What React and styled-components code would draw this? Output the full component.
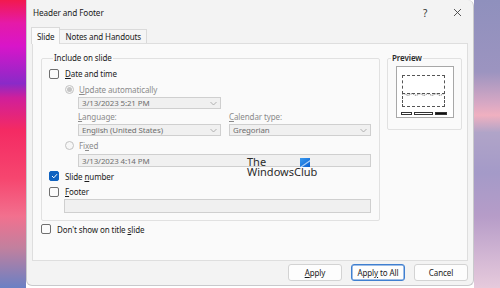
import React from "react";
import styled, { createGlobalStyle, css } from "styled-components";

const Global = createGlobalStyle`
  html, body { margin: 0; padding: 0; }
  body { width: 500px; height: 288px; overflow: hidden; font-family: "Noto Sans", "Open Sans", sans-serif; letter-spacing: -0.1px; }
`;

const Page = styled.div`
  display: grid;
  grid-template-columns: 26px 1fr 26px;
  width: 500px;
  height: 288px;
`;

const Wallpaper = styled.div`
  ${(p) =>
    p.$side === "left"
      ? css`
          background: linear-gradient(180deg, #f2194e 0%, #e51aa8 8%, #d815c9 16%, #8a2ac8 29%, #d01f9a 34%, #f42a63 45%, #f6466f 62%, #f2708e 75%, #c2809e 86%, #6a80c4 100%);
        `
      : css`
          background: linear-gradient(180deg, #8f90bd 0%, #9c94c0 25%, #d8a8c4 36%, #f0b0c0 40%, #b0a4c8 46%, #a49ac8 60%, #b69cc8 75%, #d8bcd6 92%, #e6cadc 100%);
        `}
`;

const Dialog = styled.div`
  display: flex;
  flex-direction: column;
  background: #f3f3f3;
  border: 1px solid #c9c9cc;
  border-top: none;
  border-radius: 0 6px 6px 6px;
  height: 286px;
  box-sizing: border-box;
`;

const TitleBar = styled.div`
  display: flex;
  align-items: center;
  height: 25px;
  padding: 0 0 0 6px;
  font-size: 8.2px;
  color: #1b1b1b;
`;

const Title = styled.div`
  flex: 1;
`;

const TitleButton = styled.div`
  width: 32px;
  display: flex;
  justify-content: center;
  align-items: center;
  font-size: 10px;
  color: #333;
`;

const Tabs = styled.div`
  display: flex;
  align-items: flex-end;
  height: 18px;
  padding-left: 4px;
`;

const Tab = styled.div`
  box-sizing: border-box;
  font-size: 8px;
  color: #1b1b1b;
  padding: 0 5px;
  display: flex;
  align-items: center;
  border: 1px solid #dadada;
  border-bottom: none;
  ${(p) =>
    p.$active
      ? css`
          height: 17px;
          background: #fafafa;
          margin-bottom: -1px;
          position: relative;
          z-index: 1;
        `
      : css`
          height: 14px;
          background: #f5f5f5;
          border-left: none;
        `}
`;

const Panel = styled.div`
  position: relative;
  margin: 0 5px;
  height: 218px;
  box-sizing: border-box;
  background: #fafafa;
  border: 1px solid #dedede;
  display: flex;
  flex-direction: column;
  padding: 8px 0 0 8px;
`;

const PanelTop = styled.div`
  display: flex;
  gap: 7px;
  align-items: flex-start;
`;

const Group = styled.fieldset`
  margin: 0;
  box-sizing: border-box;
  border: 1px solid #e1e1e1;
  border-radius: 2px;
  width: ${(p) => p.$w}px;
  height: ${(p) => p.$h}px;
  padding: ${(p) => p.$pad || "0"};
  display: flex;
  flex-direction: column;
  min-width: 0;
`;

const Legend = styled.legend`
  font-size: 8px;
  color: ${(p) => (p.$strong ? "#2a2a2a" : "#1b1b1b")};
  font-weight: ${(p) => (p.$strong ? 600 : 400)};
  padding: 0 1px;
  margin-left: ${(p) => p.$ml || 4}px;
  line-height: 12px;
`;

const Row = styled.div`
  display: flex;
  align-items: center;
  height: ${(p) => p.$h}px;
  padding-left: ${(p) => p.$indent || 0}px;
  margin-top: ${(p) => p.$mt || 0}px;
  gap: ${(p) => p.$gap || 6}px;
  flex-shrink: 0;
`;

const Label = styled.span`
  font-size: 8px;
  color: ${(p) => (p.$disabled ? "#8b8b8b" : "#1b1b1b")};
  white-space: nowrap;
`;

const Key = styled.span`
  text-decoration: underline;
  text-underline-offset: 1px;
`;

const Box = styled.span`
  box-sizing: border-box;
  width: 10px;
  height: 10px;
  border-radius: 2px;
  flex-shrink: 0;
  display: flex;
  align-items: center;
  justify-content: center;
  ${(p) =>
    p.$checked
      ? css`
          background: #0f62c0;
          border: 1px solid #0f62c0;
        `
      : css`
          background: #fbfbfb;
          border: 1px solid #6f6f6f;
        `}
`;

const Radio = styled.span`
  box-sizing: border-box;
  width: 9px;
  height: 9px;
  border-radius: 50%;
  border: 1px solid #c2c2c2;
  background: #f7f7f7;
  flex-shrink: 0;
  display: flex;
  align-items: center;
  justify-content: center;
  &::after {
    content: "";
    display: ${(p) => (p.$on ? "block" : "none")};
    width: 5px;
    height: 5px;
    border-radius: 50%;
    background: #c4c4c4;
  }
`;

const Field = styled.div`
  box-sizing: border-box;
  width: ${(p) => p.$w}px;
  height: ${(p) => p.$h || 12}px;
  border: 1px solid #cfcfcf;
  background: #f0f0f0;
  display: flex;
  align-items: center;
  padding-left: 3px;
  font-size: 7.9px;
  color: #6e6e6e;
  flex-shrink: 0;
`;

const FieldText = styled.span`
  flex: 1;
  white-space: nowrap;
`;

const Chevron = styled.span`
  width: 14px;
  display: flex;
  justify-content: center;
  align-items: center;
`;

const DualRow = styled.div`
  display: flex;
  gap: 8px;
  padding-left: ${(p) => p.$indent}px;
  height: ${(p) => p.$h}px;
  align-items: center;
  flex-shrink: 0;
`;

const Half = styled.div`
  width: ${(p) => p.$w}px;
  display: flex;
  align-items: center;
`;

const Outside = styled.div`
  margin-top: 3px;
`;

const Thumb = styled.div`
  box-sizing: border-box;
  margin: 2px auto 0;
  width: 58px;
  height: 52px;
  background: #fff;
  border: 1px solid #a8a8a8;
  display: flex;
  flex-direction: column;
  padding: 8px 6px 2px 5px;
`;

const Dash = styled.div`
  box-sizing: border-box;
  width: 43px;
  height: ${(p) => p.$h}px;
  border: 1px dashed #555;
  ${(p) => p.$top === false && css`border-top: none;`}
`;

const Wave = styled.svg`
  display: block;
  margin-top: -1px;
`;

const BarRow = styled.div`
  display: flex;
  gap: 2px;
  margin-top: auto;
  margin-left: -1px;
`;

const Bar = styled.div`
  height: 3px;
  width: ${(p) => p.$w}px;
  box-sizing: border-box;
  border: 1px solid #333;
  background: ${(p) => (p.$fill ? "#111" : "#fff")};
`;

const ButtonBar = styled.div`
  flex: 1;
  display: flex;
  justify-content: flex-end;
  align-items: center;
  gap: 9px;
  padding-right: 5px;
  padding-bottom: 1px;
`;

const Button = styled.div`
  box-sizing: border-box;
  width: 54px;
  height: 17px;
  background: #fdfdfd;
  border: 1px solid ${(p) => (p.$focus ? "#3f7fd0" : "#d3d3d3")};
  border-radius: 3px;
  display: flex;
  align-items: center;
  justify-content: center;
  font-size: 8px;
  color: #1b1b1b;
  ${(p) => p.$focus && css`box-shadow: inset 0 0 0 0.5px #3f7fd0;`}
`;

const ButtonText = styled.span`
  white-space: nowrap;
`;

const Watermark = styled.div`
  position: absolute;
  left: 214px;
  top: 113px;
  font-size: 11px;
  letter-spacing: 0;
  line-height: 10px;
  color: #2b2b2b;
  pointer-events: none;
`;

const Logo = styled.svg`
  position: absolute;
  left: 53px;
  top: 1px;
`;

function ChevronIcon() {
  return (
    <Chevron>
      <svg width="7" height="5" viewBox="0 0 7 5">
        <path d="M0.5 1 L3.5 4 L6.5 1" fill="none" stroke="#a8a8a8" strokeWidth="0.9" />
      </svg>
    </Chevron>
  );
}

function Check({ checked }) {
  return (
    <Box $checked={checked}>
      {checked && (
        <svg width="7" height="6" viewBox="0 0 7 6">
          <path d="M1 3 L2.8 4.8 L6 1.2" fill="none" stroke="#fff" strokeWidth="1" />
        </svg>
      )}
    </Box>
  );
}

export default function App() {
  return (
    <>
      <Global />
      <Page>
        <Wallpaper $side="left" />
        <Dialog>
          <TitleBar>
            <Title>Header and Footer</Title>
            <TitleButton>?</TitleButton>
            <TitleButton>
              <svg width="9" height="9" viewBox="0 0 9 9">
                <path d="M1 1 L8 8 M8 1 L1 8" stroke="#444" strokeWidth="0.9" />
              </svg>
            </TitleButton>
          </TitleBar>
          <Tabs>
            <Tab $active>Slide</Tab>
            <Tab>Notes and Handouts</Tab>
          </Tabs>
          <Panel>
            <PanelTop>
              <Group $w={339} $h={169} $pad="1px 0 0 7px">
                <Legend>Include on slide</Legend>
                <Row $h={17}>
                  <Check />
                  <Label><Key>D</Key>ate and time</Label>
                </Row>
                <Row $h={15} $indent={16} $gap={5}>
                  <Radio $on />
                  <Label $disabled><Key>U</Key>pdate automatically</Label>
                </Row>
                <Row $h={12} $indent={29}>
                  <Field $w={143}>
                    <FieldText>3/13/2023 5:21 PM</FieldText>
                    <ChevronIcon />
                  </Field>
                </Row>
                <DualRow $indent={29} $h={15}>
                  <Half $w={143}><Label $disabled><Key>L</Key>anguage:</Label></Half>
                  <Half $w={142}><Label $disabled><Key>C</Key>alendar type:</Label></Half>
                </DualRow>
                <DualRow $indent={29} $h={12}>
                  <Field $w={143}>
                    <FieldText>English (United States)</FieldText>
                    <ChevronIcon />
                  </Field>
                  <Field $w={142}>
                    <FieldText>Gregorian</FieldText>
                    <ChevronIcon />
                  </Field>
                </DualRow>
                <Row $h={18} $indent={16} $gap={5}>
                  <Radio />
                  <Label $disabled>Fi<Key>x</Key>ed</Label>
                </Row>
                <Row $h={13} $indent={29}>
                  <Field $w={293} $h={13}>
                    <FieldText>3/13/2023 4:14 PM</FieldText>
                  </Field>
                </Row>
                <Row $h={16} $mt={1}>
                  <Check checked />
                  <Label>Slide <Key>n</Key>umber</Label>
                </Row>
                <Row $h={15}>
                  <Check />
                  <Label><Key>F</Key>ooter</Label>
                </Row>
                <Row $h={14} $indent={15}>
                  <Field $w={307} $h={14} />
                </Row>
              </Group>
              <Group $w={75} $h={78} $pad="0">
                <Legend $strong $ml={3}>Preview</Legend>
                <Thumb>
                  <Dash $h={19} />
                  <Wave width="43" height="3" viewBox="0 0 43 3">
                    <path d="M0 1.5 Q2 0 4 1.5 T8 1.5 T12 1.5 T16 1.5 T20 1.5 T24 1.5 T28 1.5 T32 1.5 T36 1.5 T40 1.5 T44 1.5" fill="none" stroke="#555" strokeWidth="0.8" strokeDasharray="1.5 0.8" />
                  </Wave>
                  <Dash $h={11} $top={false} />
                  <BarRow>
                    <Bar $w={12} />
                    <Bar $w={21} />
                    <Bar $w={12} $fill />
                  </BarRow>
                </Thumb>
              </Group>
            </PanelTop>
            <Outside>
              <Row $h={10}>
                <Check />
                <Label>Don't show on title <Key>s</Key>lide</Label>
              </Row>
            </Outside>
            <Watermark>
              The
              <br />
              WindowsClub
              <Logo width="10" height="9" viewBox="0 0 10 9">
                <defs>
                  <linearGradient id="wcg" x1="0" y1="0" x2="1" y2="1">
                    <stop offset="0" stopColor="#3a9bf0" />
                    <stop offset="1" stopColor="#0a5fd0" />
                  </linearGradient>
                </defs>
                <rect width="10" height="9" fill="url(#wcg)" />
                <path d="M0 9 L10 2 L10 3.5 L2 9 Z" fill="#cfe6ff" opacity="0.8" />
              </Logo>
            </Watermark>
          </Panel>
          <ButtonBar>
            <Button><ButtonText><Key>A</Key>pply</ButtonText></Button>
            <Button $focus><ButtonText>Appl<Key>y</Key> to All</ButtonText></Button>
            <Button><ButtonText>Cancel</ButtonText></Button>
          </ButtonBar>
        </Dialog>
        <Wallpaper $side="right" />
      </Page>
    </>
  );
}
